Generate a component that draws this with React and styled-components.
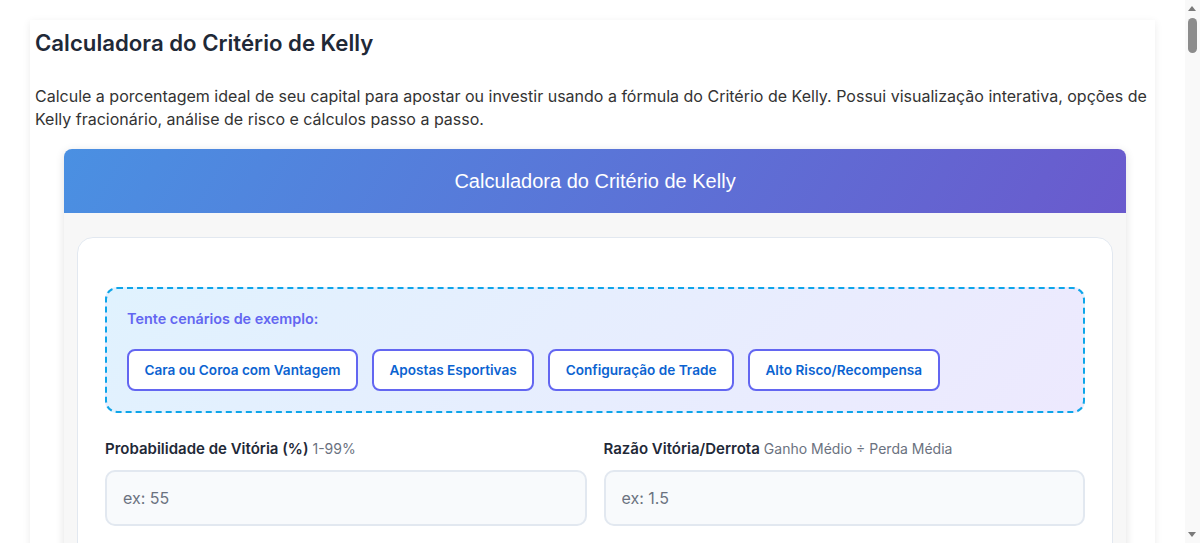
import React from 'react';
import styled, { createGlobalStyle } from 'styled-components';

const GlobalStyle = createGlobalStyle`
  html, body {
    margin: 0;
    padding: 0;
    background: #fff;
  }
  body {
    font-family: Inter, "Noto Sans", sans-serif;
    color: #333;
  }
  * {
    box-sizing: border-box;
  }
`

// the browser scrollbar of the screenshot, kept over the right edge
const ScrollTrack = styled.div`
  position: fixed;
  top: 0;
  right: 0;
  width: 15px;
  height: 100vh;
  background: #f9f9f9;
  z-index: 5;
`

const ScrollThumb = styled.div`
  position: absolute;
  top: 18px;
  left: 3px;
  width: 9px;
  height: 35px;
  border-radius: 5px;
  background: #8c8c8c;
`

const ScrollArrow = styled.div`
  position: absolute;
  left: 3px;
  width: 0;
  height: 0;
  border-left: 4.5px solid transparent;
  border-right: 4.5px solid transparent;
  ${props => props.down
    ? 'bottom: 6px; border-top: 5px solid #7a7a7a;'
    : 'top: 6px; border-bottom: 5px solid #7a7a7a;'}
`

const Page = styled.div`
  padding: 20px 45px 40px 30px;
`

const Article = styled.article`
  background: #fff;
  padding: 8px 5px 40px;
  box-shadow: 0 2px 8px rgba(0,0,0,0.08);
`

const PageTitle = styled.h1`
  margin: 0 0 28px;
  font-size: 22.2px;
  line-height: 29px;
  font-weight: 600;
  color: #1f2937;
`

const Intro = styled.p`
  margin: 0;
  font-size: 16px;
  line-height: 23px;
  color: #333;
`

const Calculator = styled.section`
  margin: 18px 24px 0 29px;
  border-radius: 8px;
  overflow: hidden;
  box-shadow: 0 2px 10px rgba(0,0,0,0.12);
  background: #f7f7f7;
`

const Header = styled.header`
  height: 64px;
  display: flex;
  align-items: center;
  justify-content: center;
  background: linear-gradient(120deg, #4a90e2 0%, #6a5acd 100%);
  color: #fff;
  font-family: "Liberation Sans", Arial, sans-serif;
  font-size: 20px;
`

const Body = styled.div`
  padding: 24px 13px 24px;
`

const Card = styled.div`
  background: #fff;
  border: 1px solid #e2e8f0;
  border-radius: 16px;
  padding: 49px 27px 40px;
  min-height: 1200px;
`

const Examples = styled.div`
  border: 2px dashed #0ea5e9;
  border-radius: 12px;
  padding: 20px;
  background: linear-gradient(135deg, #e0f2fe 0%, #ede9fe 100%);
`

const ExamplesTitle = styled.div`
  font-size: 14.4px;
  line-height: 20px;
  font-weight: 600;
  color: #6366f1;
  margin-bottom: 20px;
`

const ButtonRow = styled.div`
  display: flex;
  flex-wrap: wrap;
  gap: 14px;
`

const ExampleButton = styled.button`
  font-family: Inter, "Noto Sans", sans-serif;
  font-size: 13.6px;
  line-height: 20px;
  font-weight: 600;
  color: #0b63d1;
  background: #fff;
  border: 2px solid #6366f1;
  border-radius: 8px;
  padding: 9px 15.5px;
  cursor: pointer;
`

const FieldGrid = styled.div`
  display: grid;
  grid-template-columns: 1fr 1fr;
  gap: 16px 17px;
  margin-top: 26px;
`

const Field = styled.div`
  display: flex;
  flex-direction: column;
`

const Label = styled.label`
  font-size: 15px;
  line-height: 20px;
  font-weight: 600;
  color: #1f2937;
  margin-bottom: 11px;
`

const Hint = styled.span`
  font-size: 14px;
  font-weight: 400;
  color: #6b7280;
  margin-left: 4px;
`

const Input = styled.input`
  height: 56px;
  padding: 0 16px;
  border: 2px solid #e2e8f0;
  border-radius: 10px;
  background: #f8fafc;
  font-family: Inter, "Noto Sans", sans-serif;
  font-size: 16px;
  color: #1f2937;
  outline: none;

  &::placeholder {
    color: #6b7280;
  }
`

const scenarios = [
  'Cara ou Coroa com Vantagem',
  'Apostas Esportivas',
  'Configuração de Trade',
  'Alto Risco/Recompensa',
]

export default function App() {
  return (
    <>
      <GlobalStyle />
      <ScrollTrack>
        <ScrollArrow />
        <ScrollThumb />
        <ScrollArrow down />
      </ScrollTrack>
      <Page>
        <Article>
          <PageTitle>Calculadora do Critério de Kelly</PageTitle>
          <Intro>
            Calcule a porcentagem ideal de seu capital para apostar ou investir usando a fórmula do Critério de Kelly. Possui visualização interativa, opções de Kelly fracionário, análise de risco e cálculos passo a passo.
          </Intro>
          <Calculator>
            <Header>Calculadora do Critério de Kelly</Header>
            <Body>
              <Card>
                <Examples>
                  <ExamplesTitle>Tente cenários de exemplo:</ExamplesTitle>
                  <ButtonRow>
                    {scenarios.map(s => (
                      <ExampleButton key={s}>{s}</ExampleButton>
                    ))}
                  </ButtonRow>
                </Examples>
                <FieldGrid>
                  <Field>
                    <Label>
                      Probabilidade de Vitória (%)<Hint>1-99%</Hint>
                    </Label>
                    <Input placeholder="ex: 55" />
                  </Field>
                  <Field>
                    <Label>
                      Razão Vitória/Derrota<Hint>Ganho Médio ÷ Perda Média</Hint>
                    </Label>
                    <Input placeholder="ex: 1.5" />
                  </Field>
                </FieldGrid>
              </Card>
            </Body>
          </Calculator>
        </Article>
      </Page>
    </>
  );
}
